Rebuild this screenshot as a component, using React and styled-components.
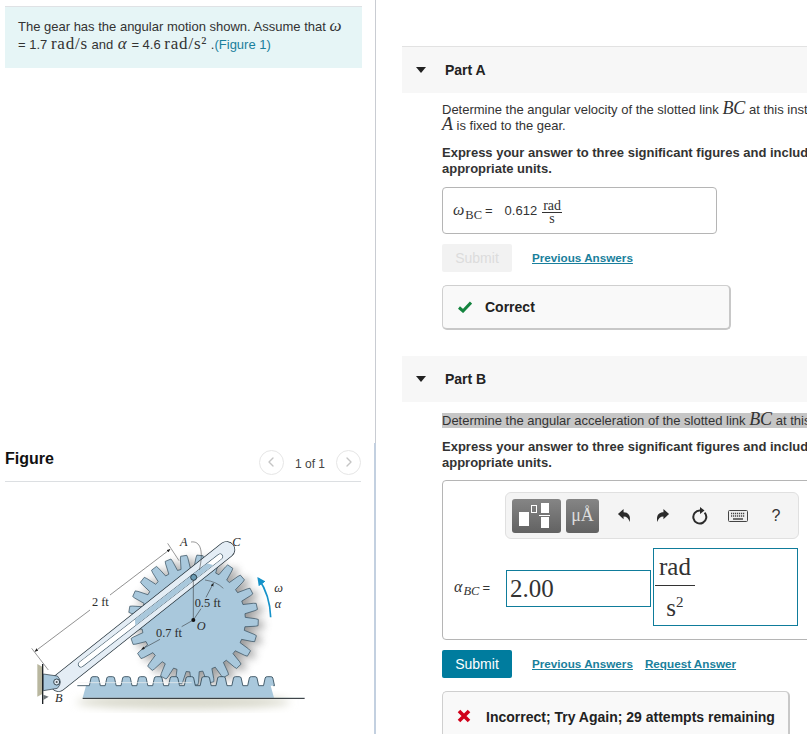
import React from "react";
import styled, { createGlobalStyle } from "styled-components";
import { ChevronLeft, ChevronRight } from "lucide-react";

const GlobalStyle = createGlobalStyle`
  html, body {
    margin: 0;
    height: 734px;
    overflow: hidden;
    background: #fff;
  }
  body {
    font-family: "Liberation Sans", Arial, sans-serif;
    font-size: 13px;
    color: #333;
  }
`;

const Page = styled.div`
  display: grid;
  grid-template-columns: 402px 405px;
  width: 807px;
  height: 734px;
  overflow: hidden;
`;

const LeftColumn = styled.div`
  width: 376px;
  display: flex;
  flex-direction: column;
`;

const ProblemPane = styled.div`
  height: 437px;
  padding: 6px 0 0 5px;
  border-right: 1px solid #c9ccd2;
`;

const Prompt = styled.div`
  width: 331px;
  height: 40px;
  padding: 11px 13px 10px;
  border-top: 1px solid #dfe2e5;
  background: #e6f5f6;
  line-height: 18px;
  white-space: nowrap;
`;

const Formula = styled.span`
  font-family: "Liberation Serif", "Times New Roman", serif;
  font-size: ${(p) => p.$size || 15}px;
  font-style: ${(p) => (p.$italic ? "italic" : "normal")};
  letter-spacing: ${(p) => p.$spacing || 0}px;
  margin: 0 ${(p) => p.$side || 0}px;
  line-height: 0;
`;

const FigureLink = styled.span`
  color: #1a7f9c;
`;

const FigurePane = styled.div`
  flex: 1;
  padding-left: 5px;
  border-right: 2px solid #c3d0e0;
`;

const FigureHead = styled.div`
  width: 356px;
  height: 38px;
  display: flex;
  align-items: center;
  justify-content: space-between;
  border-bottom: 1px solid #dcdfe2;
`;

const FigureTitle = styled.h2`
  margin: -6px 0 0;
  font-size: 16px;
  font-weight: 700;
  color: #111;
`;

const Pager = styled.div`
  display: flex;
  align-items: center;
  gap: 11px;
`;

const PagerButton = styled.span`
  box-sizing: border-box;
  width: 25px;
  height: 25px;
  display: flex;
  align-items: center;
  justify-content: center;
  border: 1px solid #e6e6e6;
  border-radius: 50%;
  color: #c4c4c4;
`;

const PagerText = styled.span`
  margin-top: 3px;
  font-size: 12px;
  color: #444;
`;

const Drawing = styled.svg`
  display: block;
  width: 320px;
  height: 214px;
  margin: 38px 0 0 -5px;
`;

const FigText = styled.text`
  font-family: "Liberation Serif", "Times New Roman", serif;
  font-size: ${(p) => p.$size || 37}px;
  font-style: ${(p) => (p.$italic ? "italic" : "normal")};
  fill: #2b2b2b;
`;

const RightColumn = styled.div`
  padding-top: 46px;
  overflow: hidden;
`;

const PartHeader = styled.div`
  height: 46px;
  display: flex;
  align-items: center;
  gap: 19px;
  padding-left: 14px;
  margin-top: ${(p) => p.$top || 0}px;
  background: #f7f7f7;
  border-top: ${(p) => (p.$line ? "1px solid #e2e2e2" : "none")};
`;

const Caret = styled.span`
  width: 0;
  height: 0;
  border-left: 5px solid transparent;
  border-right: 5px solid transparent;
  border-top: 6px solid #222;
`;

const PartTitle = styled.span`
  font-size: 14px;
  font-weight: 700;
  color: #222;
`;

const PartBody = styled.div`
  padding-left: 40px;
`;

const Lines = styled.p`
  margin: ${(p) => p.$top}px 0 0;
  width: 500px;
  line-height: 16px;
  font-size: 13px;
  white-space: nowrap;
  font-weight: ${(p) => (p.$bold ? 700 : 400)};
`;

const Selected = styled.span`
  background: #c6c6c6;
`;

const AnswerShown = styled.div`
  box-sizing: border-box;
  width: 275px;
  height: 47px;
  margin-top: 10px;
  padding-left: 10px;
  display: flex;
  align-items: center;
  border: 1px solid #b5b5b5;
  border-radius: 4px;
`;

const Symbol = styled.span`
  white-space: nowrap;
`;

const Sub = styled.sub`
  margin: 0 3px 0 1px;
  font-family: "Liberation Serif", "Times New Roman", serif;
  font-size: 12.5px;
  font-style: ${(p) => (p.$italic ? "italic" : "normal")};
  line-height: 0;
`;

const Value = styled.span`
  margin: 0 5px 0 12px;
`;

const Fraction = styled.span`
  display: inline-flex;
  flex-direction: column;
  align-items: center;
  margin-top: ${(p) => p.$top || 0}px;
  font-family: "Liberation Serif", "Times New Roman", serif;
  font-size: ${(p) => p.$size}px;
  line-height: ${(p) => p.$line}px;
`;

const Numerator = styled.span`
  padding: 0 ${(p) => p.$pad}px;
  border-bottom: 1px solid #333;
`;

const Denominator = styled.span`
  padding-top: ${(p) => p.$top || 0}px;
`;

const ActionRow = styled.div`
  height: 28px;
  margin-top: 10px;
  display: flex;
  align-items: center;
  gap: 12px;
`;

const SubmitButton = styled.button`
  width: 70px;
  height: 28px;
  margin-right: 8px;
  padding: 0;
  border: none;
  border-radius: 2px;
  font: 14px "Liberation Sans", Arial, sans-serif;
  color: ${(p) => (p.disabled ? "#dcdcdc" : "#fff")};
  background: ${(p) => (p.disabled ? "#f2f2f2" : "#007c9e")};
`;

const ActionLink = styled.a`
  margin-top: -2px;
  font-size: 11.7px;
  font-weight: 700;
  color: #1a7f9c;
  text-decoration: underline;
`;

const Feedback = styled.div`
  box-sizing: border-box;
  width: ${(p) => p.$width}px;
  height: ${(p) => p.$height}px;
  margin-top: 13px;
  padding: ${(p) => p.$padTop || 0}px 0 0 ${(p) => p.$pad}px;
  display: flex;
  align-items: ${(p) => (p.$open ? "flex-start" : "center")};
  gap: ${(p) => p.$gap}px;
  background: #f9f9f9;
  border: 1px solid #cfcfcf;
  border-right: 2px solid #c8c8c8;
  border-bottom: 2px solid #c8c8c8;
  border-radius: 5px;
`;

const FeedbackText = styled.span`
  font-size: 14px;
  font-weight: 700;
  color: #222;
`;

const AnswerEditor = styled.div`
  box-sizing: border-box;
  width: 400px;
  height: 160px;
  margin-top: 9px;
  padding: 11px 0 0 62px;
  border: 1px solid #b5b5b5;
  border-radius: 4px;
`;

const Toolbar = styled.div`
  box-sizing: border-box;
  width: 294px;
  height: 47px;
  padding-left: 6px;
  display: flex;
  align-items: center;
  background: #f4f4f4;
  border: 1px solid #e0e0e0;
  border-radius: 6px;
`;

const TemplateButton = styled.span`
  width: ${(p) => p.$width}px;
  height: 34px;
  margin-right: 5px;
  display: flex;
  align-items: center;
  justify-content: center;
  border-radius: 3px;
  color: #ddd;
  font-family: "Liberation Serif", "Times New Roman", serif;
  font-size: 18px;
  background: linear-gradient(#858585, #626262);
`;

const ToolIcons = styled.div`
  display: grid;
  grid-template-columns: repeat(5, 38px);
  margin-left: 1px;
  justify-items: center;
  align-items: center;
  color: #333;
`;

const Help = styled.span`
  font-size: 16px;
  color: #333;
`;

const EntryRow = styled.div`
  display: flex;
  align-items: center;
  height: 78px;
  margin: 9px 0 0 -51px;
`;

const EntryLabel = styled.span`
  width: 52px;
  flex: none;
  white-space: nowrap;
`;

const ValueInput = styled.div`
  box-sizing: border-box;
  flex: none;
  width: 145px;
  height: 37px;
  margin: 2px 2px 0 0;
  padding-left: 3px;
  border: 1px solid #0f7c9b;
  font-family: "Liberation Serif", "Times New Roman", serif;
  font-size: 25px;
  line-height: 35px;
`;

const UnitBox = styled.div`
  box-sizing: border-box;
  flex: none;
  width: 145px;
  height: 78px;
  padding: 0 0 0 1px;
  border: 1px solid #0f7c9b;
`;

const Sup = styled.sup`
  font-size: 15px;
  line-height: 0;
`;

const FlippedIcon = styled.span`
  display: flex;
  transform: scaleX(-1);
`;

const GEAR_CX = 580;
const GEAR_CY = 300;

// gear outline, one trapezoid per tooth
const gearPath = (teeth, root, tip) => {
  const step = (Math.PI * 2) / teeth;
  const pt = (r, a) =>
    `${(GEAR_CX + r * Math.cos(a)).toFixed(1)} ${(GEAR_CY + r * Math.sin(a)).toFixed(1)}`;
  let d = "";
  for (let i = 0; i < teeth; i++) {
    const a = i * step + 0.04;
    d += `${i === 0 ? "M" : "L"}${pt(root, a - step * 0.36)} `;
    d += `L${pt(tip - 8, a - step * 0.24)} L${pt(tip, a - step * 0.19)} `;
    d += `L${pt(tip, a + step * 0.19)} L${pt(tip - 8, a + step * 0.24)} L${pt(root, a + step * 0.36)} `;
  }
  return d + "Z";
};

const rackTeeth = () => {
  let d = "M232 497 ";
  for (let x = 268; x < 800; x += 47.5) {
    d += `L${x} 497 L${x + 5} 474 Q${x + 6} 470 ${x + 11} 470 L${x + 22} 470 Q${x + 27} 470 ${x + 28} 474 L${x + 33} 497 `;
  }
  return d + "L820 497";
};

const GearFigure = () => {
  const gear = gearPath(25, 156, 195);
  return (
    <Drawing viewBox="0 0 960 642">
      <defs>
        <filter id="soft" x="-20%" y="-20%" width="140%" height="140%">
          <feGaussianBlur stdDeviation="12" />
        </filter>
        <filter id="crisp">
          <feGaussianBlur stdDeviation="0.9" />
        </filter>
        <clipPath id="gearClip">
          <circle cx={GEAR_CX} cy={GEAR_CY} r="175" />
        </clipPath>
        <marker id="tip" markerWidth="8" markerHeight="8" refX="6" refY="3" orient="auto-start-reverse">
          <path d="M0 0 L7 3 L0 6 Z" fill="#222" />
        </marker>
        <marker id="blueTip" markerWidth="6" markerHeight="6" refX="4" refY="2.5" orient="auto">
          <path d="M0 0 L5 2.5 L0 5 Z" fill="#1592c9" />
        </marker>
      </defs>

      <ellipse cx="550" cy="546" rx="320" ry="22" fill="#d9d9cc" filter="url(#soft)" />
      <path d={gear} transform="translate(16 8)" fill="#777" opacity="0.75" filter="url(#soft)" />

      <g filter="url(#crisp)">
        <path d={gear} fill="#a9c8dc" stroke="#2c4656" strokeWidth="2" />

        <path d={rackTeeth() + " L812 497 L822 533 L248 533 L258 497 Z"} fill="#a9c8dc" />
        <path d={rackTeeth()} fill="none" stroke="#2c4656" strokeWidth="2.5" />
        <line x1="232" y1="488" x2="575" y2="488" stroke="#f2f2f2" strokeWidth="2" />
        <line x1="248" y1="535" x2="914" y2="535" stroke="#1c2226" strokeWidth="3" />

        <line x1="175" y1="490" x2="680" y2="89" stroke="#1c2a33" strokeWidth="51" strokeLinecap="round" />
        <line x1="175" y1="490" x2="680" y2="89" stroke="#e4edf5" strokeWidth="47" strokeLinecap="round" />
        <line x1="243" y1="433" x2="660" y2="110" stroke="#2c4656" strokeWidth="18" strokeLinecap="round" />
        <line x1="243" y1="433" x2="660" y2="110" stroke="#fff" strokeWidth="15" strokeLinecap="round" />
        <g clipPath="url(#gearClip)">
          <line x1="243" y1="433" x2="660" y2="110" stroke="#a9c8dc" strokeWidth="15" />
        </g>

        <path d="M127 440 L112 432 L112 530 L127 522 Z" fill="#b9b79f" />
        <line x1="128" y1="432" x2="128" y2="552" stroke="#1c2226" strokeWidth="4" />
        <path d="M130 462 L172 468 Q190 486 172 505 L130 512 Z" fill="#a9c8dc" stroke="#1c2a33" strokeWidth="2" />
        <circle cx="170" cy="486" r="9" fill="#dfeaf3" stroke="#1c2a33" strokeWidth="2.5" />
        <circle cx="170" cy="486" r="3" fill="#555" />
        <path d="M130 524 L146 530 L130 540 Z" fill="#6d7478" />

        <line x1="580" y1="172" x2="580" y2="300" stroke="#222" strokeWidth="1.5" />
        <circle cx="581" cy="172" r="9" fill="#6b9cb5" stroke="#1c2a33" strokeWidth="2.5" />
        <circle cx="580" cy="300" r="6" fill="#111" />

        <path d="M573 66 C600 62 612 90 598 150" fill="none" stroke="#333" strokeWidth="1.5" />

        <line x1="95" y1="385" x2="145" y2="450" stroke="#333" strokeWidth="1.5" />
        <line x1="503" y1="70" x2="537" y2="122" stroke="#333" strokeWidth="1.5" />
        <line x1="330" y1="225" x2="510" y2="88" stroke="#222" strokeWidth="1.5" markerEnd="url(#tip)" />
        <line x1="270" y1="270" x2="105" y2="394" stroke="#222" strokeWidth="1.5" markerEnd="url(#tip)" />

        <path d="M615 180 Q650 185 670 205" fill="none" stroke="#333" strokeWidth="1.5" />
        <line x1="618" y1="232" x2="640" y2="190" stroke="#222" strokeWidth="1.5" markerEnd="url(#tip)" />
        <line x1="580" y1="300" x2="603" y2="266" stroke="#222" strokeWidth="1.5" />
        <line x1="580" y1="300" x2="545" y2="320" stroke="#222" strokeWidth="1.5" />
        <line x1="480" y1="358" x2="425" y2="388" stroke="#222" strokeWidth="1.5" markerEnd="url(#tip)" />

        <path d="M812 292 Q810 225 775 175" fill="none" stroke="#1592c9" strokeWidth="5" markerEnd="url(#blueTip)" />
      </g>

      <FigText x="540" y="78" $italic>A</FigText>
      <FigText x="697" y="78" $italic>C</FigText>
      <FigText x="276" y="257">2 ft</FigText>
      <FigText x="584" y="260">0.5 ft</FigText>
      <FigText x="468" y="351">0.7 ft</FigText>
      <FigText x="590" y="330" $italic>O</FigText>
      <FigText x="165" y="547" $italic>B</FigText>
      <FigText x="823" y="216" $italic>ω</FigText>
      <FigText x="824" y="265" $italic>α</FigText>
    </Drawing>
  );
};

const TemplateIcon = () => (
  <svg width="35" height="25" viewBox="0 0 35 25">
    <rect x="0" y="9" width="10" height="14" fill="#fff" />
    <rect x="12.5" y="2.5" width="5" height="7" fill="none" stroke="#fff" />
    <rect x="22" y="0" width="8" height="10" fill="#fff" />
    <rect x="20" y="12" width="11" height="1" fill="#fff" />
    <rect x="22" y="14" width="8" height="11" fill="#fff" />
  </svg>
);

const ArrowIcon = () => (
  <svg width="15" height="15" viewBox="0 0 16 16">
    <path d="M1 6.5 L7 1 L7 4.5 C12 4.5 15 8 13.5 15 C12.5 11 10.5 9 7 9 L7 12 Z" fill="#2b2b2b" />
  </svg>
);

const ResetIcon = () => (
  <svg width="18" height="18" viewBox="0 0 18 18">
    <path d="M13.6 5.6 A6.5 6.5 0 1 1 9 3.5" fill="none" stroke="#2b2b2b" strokeWidth="2" />
    <path d="M9 0 L13.5 3.5 L9 7 Z" fill="#2b2b2b" />
  </svg>
);

const KeyboardIcon = () => (
  <svg width="20" height="12" viewBox="0 0 20 12">
    <rect x="0.5" y="0.5" width="19" height="11" rx="1" fill="#eee" stroke="#444" />
    <path d="M3 3.5h14M3 6h14" stroke="#444" strokeWidth="1.5" strokeDasharray="1.2 0.8" />
    <path d="M5 9h10" stroke="#444" strokeWidth="1.5" />
  </svg>
);

const CheckIcon = () => (
  <svg width="14" height="12" viewBox="0 0 14 12">
    <path d="M1 6.5 L5 10 L13 1.5" fill="none" stroke="#14843f" strokeWidth="3" />
  </svg>
);

const CrossIcon = () => (
  <svg width="14" height="14" viewBox="0 0 14 14">
    <path d="M2 2 L12 12 M12 2 L2 12" fill="none" stroke="#d0021b" strokeWidth="3.6" />
  </svg>
);

const App = () => (
  <>
    <GlobalStyle />
    <Page>
      <LeftColumn>
        <ProblemPane>
          <Prompt>
            The gear has the angular motion shown. Assume that <Formula $italic $size={17}>ω</Formula>
            <br />
            = 1.7 <Formula $size={17} $spacing={0.8}>rad/s</Formula> and <Formula $italic $size={17} $side={1}>α</Formula> = 4.6 <Formula $size={17} $spacing={0.8}>rad/s²</Formula> .
            <FigureLink>(Figure 1)</FigureLink>
          </Prompt>
        </ProblemPane>
        <FigurePane>
          <FigureHead>
            <FigureTitle>Figure</FigureTitle>
            <Pager>
              <PagerButton><ChevronLeft size={16} /></PagerButton>
              <PagerText>1 of 1</PagerText>
              <PagerButton><ChevronRight size={16} /></PagerButton>
            </Pager>
          </FigureHead>
          <GearFigure />
        </FigurePane>
      </LeftColumn>

      <RightColumn>
        <PartHeader $line>
          <Caret />
          <PartTitle>Part A</PartTitle>
        </PartHeader>
        <PartBody>
          <Lines $top={9}>
            Determine the angular velocity of the slotted link <Formula $italic $size={18}>BC</Formula> at this instant if
            <br />
            <Formula $italic $size={18}>A</Formula> is fixed to the gear.
          </Lines>
          <Lines $top={11} $bold>
            Express your answer to three significant figures and include the
            <br />
            appropriate units.
          </Lines>
          <AnswerShown>
            <Symbol><Formula $italic $size={16}>ω</Formula><Sub>BC</Sub>=</Symbol>
            <Value>0.612</Value>
            <Fraction $size={14} $line={12} $top={3}>
              <Numerator $pad={1}>rad</Numerator>
              <span>s</span>
            </Fraction>
          </AnswerShown>
          <ActionRow>
            <SubmitButton disabled>Submit</SubmitButton>
            <ActionLink>Previous Answers</ActionLink>
          </ActionRow>
          <Feedback $width={289} $height={45} $pad={15} $gap={13}>
            <CheckIcon />
            <FeedbackText>Correct</FeedbackText>
          </Feedback>
        </PartBody>

        <PartHeader $top={26}>
          <Caret />
          <PartTitle>Part B</PartTitle>
        </PartHeader>
        <PartBody>
          <Lines $top={11}>
            <Selected>
              Determine the angular acceleration of the slotted link <Formula $italic $size={18}>BC</Formula> at this instant
            </Selected>
          </Lines>
          <Lines $top={10} $bold>
            Express your answer to three significant figures and include the
            <br />
            appropriate units.
          </Lines>
          <AnswerEditor>
            <Toolbar>
              <TemplateButton $width={49}><TemplateIcon /></TemplateButton>
              <TemplateButton $width={33}>μÅ</TemplateButton>
              <ToolIcons>
                <ArrowIcon />
                <FlippedIcon><ArrowIcon /></FlippedIcon>
                <ResetIcon />
                <KeyboardIcon />
                <Help>?</Help>
              </ToolIcons>
            </Toolbar>
            <EntryRow>
              <EntryLabel>
                <Formula $italic $size={16}>α</Formula><Sub $italic>BC</Sub>=
              </EntryLabel>
              <ValueInput>2.00</ValueInput>
              <UnitBox>
                <Fraction $size={25} $line={36}>
                  <Numerator $pad={4}>rad</Numerator>
                  <Denominator $top={4}>s<Sup>2</Sup></Denominator>
                </Fraction>
              </UnitBox>
            </EntryRow>
          </AnswerEditor>
          <ActionRow>
            <SubmitButton>Submit</SubmitButton>
            <ActionLink>Previous Answers</ActionLink>
            <ActionLink>Request Answer</ActionLink>
          </ActionRow>
          <Feedback $width={348} $height={60} $pad={14} $padTop={17} $gap={15} $open>
            <CrossIcon />
            <FeedbackText>Incorrect; Try Again; 29 attempts remaining</FeedbackText>
          </Feedback>
        </PartBody>
      </RightColumn>
    </Page>
  </>
);

export default App;
